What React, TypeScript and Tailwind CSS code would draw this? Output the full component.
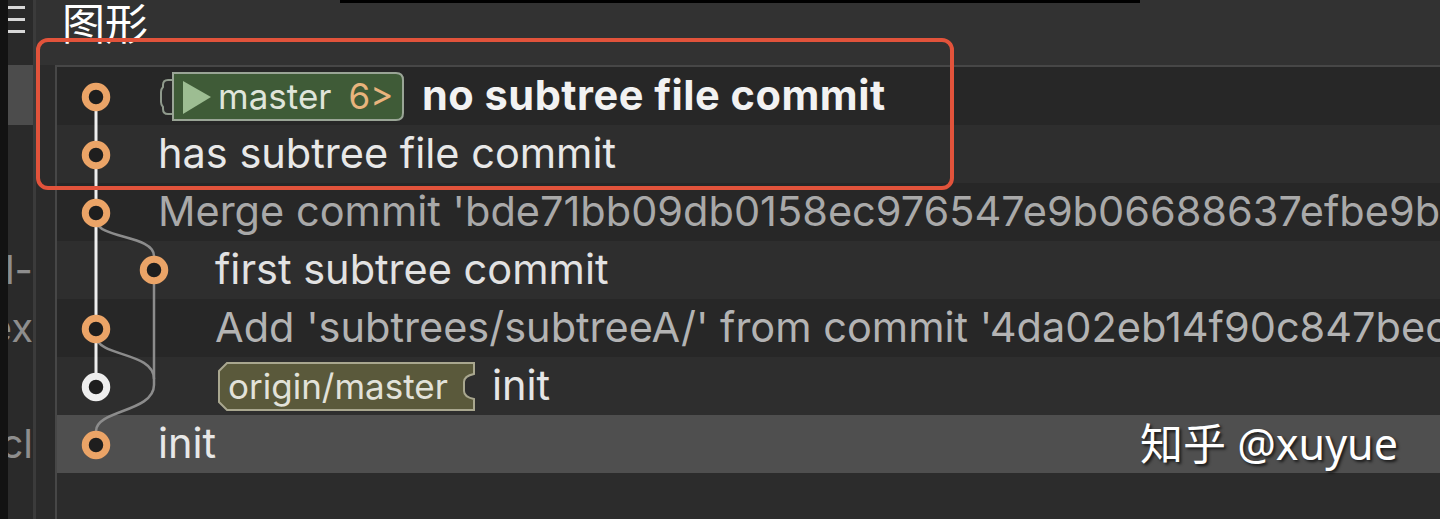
import React from "react";

const FONT = { fontFamily: "Inter, 'Liberation Sans', 'Noto Sans CJK SC', sans-serif" };

function MasterLabel() {
  return (
    <div className="relative w-[244px] h-[49px] shrink-0">
      <svg className="absolute inset-0" width="244" height="49" viewBox="0 0 244 49">
        <path d="M13 8 L8 8 Q3 8 3 13 L3 15 Q1 17 1 20 L1 30 Q1 33 3 35 L3 37 Q3 42 8 42 L13 42" fill="#2a2a2a" stroke="#8f9a8c" strokeWidth="2" />
        <path d="M13 1 L236 1 Q243 1 243 8 L243 41 Q243 48 236 48 L13 48 Z" fill="#3f5b37" stroke="#9aa596" strokeWidth="2" />
        <path d="M23 9 L51 25 L23 42 Z" fill="#9dbd92" />
      </svg>
      <div className="relative h-full flex items-center pl-[58px] text-[35px] leading-none" style={FONT}>
        <span className="text-[#dfe5da]">master</span>
        <span className="text-[#e9b47d] ml-[17px]">6&gt;</span>
      </div>
    </div>
  );
}

function OriginLabel() {
  return (
    <div className="relative w-[257px] h-[49px] shrink-0">
      <svg className="absolute inset-0" width="257" height="49" viewBox="0 0 257 49">
        <path d="M9 1 L256 1 L256 12 Q246 14 246 20 L246 29 Q246 35 256 37 L256 48 L9 48 L1 40 L1 9 Z" fill="#5a593b" stroke="#a9a78f" strokeWidth="2" />
      </svg>
      <div className="relative h-full flex items-center pl-[10px] text-[35px] leading-none text-[#e2e2da]" style={FONT}>
        origin/master
      </div>
    </div>
  );
}

type Row = {
  indent: number;
  content: React.ReactNode;
  bg: string;
};

export default function App() {
  const rows: Row[] = [
    {
      indent: 103,
      bg: "bg-[#272727]",
      content: (
        <div className="flex items-center gap-[18px]">
          <MasterLabel />
          <span className="font-bold text-[#f2f2f2] tracking-[0.5px]">no subtree file commit</span>
        </div>
      ),
    },
    { indent: 101, bg: "bg-[#2e2e2e]", content: <span className="text-[#e8e8e8]">has subtree file commit</span> },
    {
      indent: 101,
      bg: "bg-[#272727]",
      content: <span className="text-[#a9a9a9]">Merge commit 'bde71bb09db0158ec976547e9b06688637efbe9b'</span>,
    },
    { indent: 158, bg: "bg-[#2e2e2e]", content: <span className="text-[#e2e2e2]">first subtree commit</span> },
    {
      indent: 158,
      bg: "bg-[#272727]",
      content: (
        <span className="text-[#b3b3b3]">Add 'subtrees/subtreeA/' from commit '4da02eb14f90c847bec2a8e1'</span>
      ),
    },
    {
      indent: 161,
      bg: "bg-[#2e2e2e]",
      content: (
        <div className="flex items-center gap-[17px]">
          <OriginLabel />
          <span className="text-[#e6e6e6]">init</span>
        </div>
      ),
    },
    { indent: 101, bg: "bg-[#4f4f4f]", content: <span className="text-[#e8e8e8]">init</span> },
  ];

  const orange = "#eba467";
  const circles = [
    { x: 39, y: 30, c: orange },
    { x: 39, y: 88, c: orange },
    { x: 39, y: 146, c: orange },
    { x: 97, y: 203, c: orange },
    { x: 39, y: 262, c: orange },
    { x: 39, y: 320, c: "#eeeeee" },
    { x: 39, y: 378, c: orange },
  ];

  const sideText = "h-[58px] flex items-center justify-end overflow-hidden text-[40px] text-[#8e8e8e] whitespace-nowrap";

  return (
    <div className="relative w-[1440px] h-[519px] flex overflow-hidden bg-[#141414]" style={FONT}>
      {/* left dark strip */}
      <div className="w-[8px] shrink-0 bg-[#121212]" />
      {/* sidebar */}
      <div className="w-[25px] shrink-0 bg-[#2a2a2a] flex flex-col overflow-hidden">
        <div className="h-[65px] flex flex-col gap-[9px] pt-[6px]">
          <div className="h-[3px] w-[17px] bg-[#d8d8d8]" />
          <div className="h-[3px] w-[17px] bg-[#d8d8d8]" />
          <div className="h-[3px] w-[17px] bg-[#d8d8d8]" />
        </div>
        <div className="h-[60px] bg-[#4c4c4c]" />
        <div className="h-[116px]" />
        <div className={sideText}>
          <span>el-</span>
        </div>
        <div className={sideText}>
          <span>ex</span>
        </div>
        <div className="h-[58px]" />
        <div className={sideText}>
          <span>cl</span>
        </div>
      </div>
      <div className="w-[3px] shrink-0 bg-[#3b3b3b]" />
      {/* main */}
      <div className="flex-1 flex flex-col bg-[#2c2c2c] min-w-0">
        <div className="h-[65px] shrink-0 bg-[#323232] flex flex-col">
          <div className="h-[3px] flex">
            <div className="w-[304px]" />
            <div className="w-[800px] bg-black" />
          </div>
          <div
            className="pl-[26px] text-[43px] leading-none text-white -mt-[3px]"
            style={{ fontFamily: "'Noto Sans CJK SC', sans-serif" }}
          >
            图形
          </div>
        </div>
        <div className="flex-1 flex min-h-0">
          <div className="w-[19px] shrink-0 bg-[#2b2b2b]" />
          <div className="flex-1 min-w-0 border-l-2 border-t-2 border-[#474747] bg-[#2c2c2c] relative flex flex-col">
            {rows.map((r, i) => (
              <div
                key={i}
                className={`h-[58px] shrink-0 flex items-center whitespace-nowrap overflow-hidden text-[41.5px] leading-none ${r.bg}`}
                style={{ paddingLeft: r.indent }}
              >
                {r.content}
              </div>
            ))}
            <svg className="absolute left-0 top-0" width="140" height="420" viewBox="0 0 140 420">
              <g fill="none" stroke="#8c8c8c" strokeWidth="2.5">
                <path d="M39 154 C 42 172, 97 168, 97 189" />
                <path d="M97 217 L97 318 C 97 345, 39 343, 39 364" />
                <path d="M39 270 C 42 290, 97 285, 97 312" />
              </g>
              <line x1="39" y1="30" x2="39" y2="320" stroke="#eeeeee" strokeWidth="3" />
              {circles.map((c, i) => (
                <circle key={i} cx={c.x} cy={c.y} r="10.75" fill="#1e1e1e" stroke={c.c} strokeWidth="7" />
              ))}
            </svg>
          </div>
        </div>
      </div>
      {/* red highlight */}
      <div className="absolute left-[36px] top-[38px] w-[918px] h-[152px] border-[4px] border-[#e2533b] rounded-[12px] pointer-events-none" />
      {/* watermark */}
      <div
        className="absolute left-[1140px] top-[422px] text-[43px] text-white leading-none [text-shadow:2px_2px_3px_rgba(0,0,0,0.7)]"
        style={{ fontFamily: "'Noto Sans', 'Noto Sans CJK SC', sans-serif" }}
      >
        知乎 @xuyue
      </div>
    </div>
  );
}
